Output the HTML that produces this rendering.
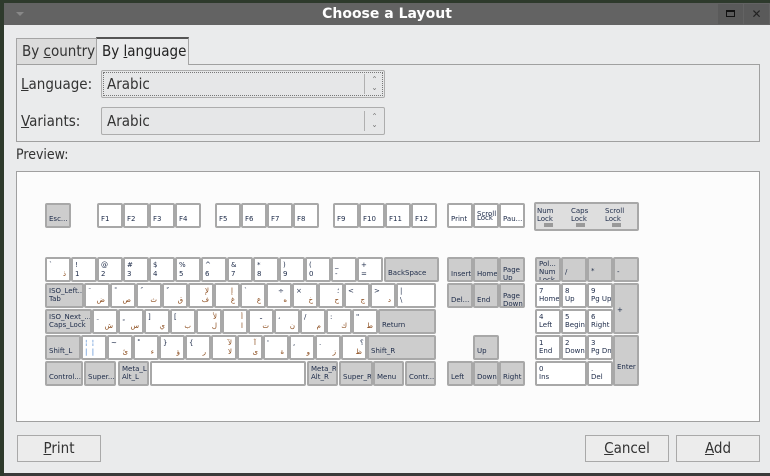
<!DOCTYPE html><html><head><meta charset="utf-8"><style>
*{margin:0;padding:0;box-sizing:border-box}
body{width:770px;height:476px;background:#2e3a2c;position:relative;overflow:hidden;font-family:"DejaVu Sans Condensed","DejaVu Sans","Liberation Sans",sans-serif}
.win{position:absolute;left:4px;top:3px;width:766px;height:471px;background:#eaebec}
.tb{position:absolute;left:0;top:0;width:766px;height:22px;background:#636363;color:#fff;font-weight:bold;font-size:14px;text-align:center;line-height:22px;font-family:"DejaVu Sans",sans-serif}
.a{position:absolute;white-space:nowrap}
.k{position:absolute;height:25px;border:2px solid #a8a8a8;border-radius:2px;background:#fff;font-size:7px;color:#1c2a48;line-height:8px;overflow:hidden;white-space:nowrap;font-family:"DejaVu Sans",sans-serif}
.g{background:#cdcdcd}
.k .t{position:absolute;left:2px;top:2px}
.k .b{position:absolute;left:2px;bottom:2px}
.k .m{position:absolute;left:2px;top:8px}
.k .r{position:absolute;right:3px;bottom:2px;color:#8a4a1a;font-family:"DejaVu Sans",sans-serif}
.btn{position:absolute;height:27px;border:1px solid #a9a9a9;background:#ececec;font-size:15px;color:#333;text-align:center;line-height:25px}
.cb{position:absolute;left:101px;width:284px;height:28px;border:1px solid #adadad;border-radius:2px;background:#e6e7e8;font-size:15px;color:#333;line-height:26px;padding-left:5px}
.cb .s{position:absolute;right:0;top:3px;width:20px;height:20px;border-left:1px solid #b0b0b0;font-size:8px;line-height:8px;text-align:center;color:#777;padding-top:2px}
.lbl{position:absolute;font-size:15px;color:#333;white-space:nowrap}
</style></head><body>
<div class="win">
<div class="tb">Choose a Layout
<div class="a" style="left:12px;top:9px;width:0;height:0;border-left:4px solid transparent;border-right:4px solid transparent;border-top:4px solid #888"></div>
<div class="a" style="left:714px;top:1px;width:25px;height:20px;background:#5a5a5a"><div class="a" style="left:8px;top:6px;width:9px;height:7px;border:1px solid #111;border-top:2px solid #111"></div></div>
<div class="a" style="left:740px;top:1px;width:25px;height:20px;background:#5a5a5a;color:#222;font-weight:normal;font-size:12px;line-height:20px;text-align:center">✕</div>
</div>
</div>
<!-- tabs -->
<div class="a" style="left:16px;top:38px;width:81px;height:27px;border:1px solid #a5a5a5;background:#dcdcdc;font-size:15px;color:#333;line-height:25px;padding-left:5px">By <u>c</u>ountry</div>
<div class="a" style="left:16px;top:64px;width:744px;height:78px;border:1px solid #a0a0a0"></div>
<div class="a" style="left:96px;top:37px;width:93px;height:28px;border:1px solid #a5a5a5;border-top:2px solid #555;border-bottom:none;background:#eaebec;font-size:15px;color:#222;line-height:24px;padding-left:5px">By <u>l</u>anguage</div>
<div class="lbl" style="left:21px;top:75px"><u>L</u>anguage:</div>
<div class="cb" style="top:70px;outline:1px dotted #777;outline-offset:-3px">Arabic<div class="s">⌃<br>⌄</div></div>
<div class="lbl" style="left:21px;top:112px"><u>V</u>ariants:</div>
<div class="cb" style="top:107px">Arabic<div class="s">⌃<br>⌄</div></div>
<div class="lbl" style="left:16px;top:147px;font-size:14px">Preview:</div>
<div class="a" style="left:16px;top:171px;width:744px;height:251px;border:1px solid #a0a0a0;background:#fcfcfc"></div>
<!-- F row -->
<div class="k g" style="left:45px;top:203px;width:26px"><span class="m" style="top:10px">Esc...</span></div>
<div class="k" style="left:97px;top:203px;width:26px"><span class="m" style="top:10px">F1</span></div>
<div class="k" style="left:123px;top:203px;width:26px"><span class="m" style="top:10px">F2</span></div>
<div class="k" style="left:149px;top:203px;width:26px"><span class="m" style="top:10px">F3</span></div>
<div class="k" style="left:175px;top:203px;width:26px"><span class="m" style="top:10px">F4</span></div>
<div class="k" style="left:215px;top:203px;width:26px"><span class="m" style="top:10px">F5</span></div>
<div class="k" style="left:241px;top:203px;width:26px"><span class="m" style="top:10px">F6</span></div>
<div class="k" style="left:267px;top:203px;width:26px"><span class="m" style="top:10px">F7</span></div>
<div class="k" style="left:293px;top:203px;width:26px"><span class="m" style="top:10px">F8</span></div>
<div class="k" style="left:333px;top:203px;width:26px"><span class="m" style="top:10px">F9</span></div>
<div class="k" style="left:359px;top:203px;width:26px"><span class="m" style="top:10px">F10</span></div>
<div class="k" style="left:385px;top:203px;width:26px"><span class="m" style="top:10px">F11</span></div>
<div class="k" style="left:411px;top:203px;width:26px"><span class="m" style="top:10px">F12</span></div>
<div class="k" style="left:447px;top:203px;width:26px"><span class="m" style="top:10px">Print</span></div>
<div class="k" style="left:473px;top:203px;width:26px"><span class="t" style="top:5px">Scroll</span><span class="b" style="bottom:4px">Lock</span></div>
<div class="k" style="left:499px;top:203px;width:26px"><span class="m" style="top:10px">Pau...</span></div>
<div class="k g" style="left:534px;top:202px;width:105px;height:29px;background:#dedede"><span class="t" style="left:1px;top:3px">Num<br>Lock</span><span class="t" style="left:35px;top:3px">Caps<br>Lock</span><span class="t" style="left:69px;top:3px">Scroll<br>Lock</span>
<div class="a" style="left:8px;top:19px;width:9px;height:4px;background:#999"></div><div class="a" style="left:40px;top:19px;width:9px;height:4px;background:#999"></div><div class="a" style="left:76px;top:19px;width:9px;height:4px;background:#999"></div></div>
<!-- row 1 -->
<div class="k" style="left:45px;top:257px;width:26px"><span class="t">ˋ</span><span class="r">ذ</span></div>
<div class="k" style="left:71px;top:257px;width:26px"><span class="t">!</span><span class="b">1</span></div>
<div class="k" style="left:97px;top:257px;width:26px"><span class="t">@</span><span class="b">2</span></div>
<div class="k" style="left:123px;top:257px;width:26px"><span class="t">#</span><span class="b">3</span></div>
<div class="k" style="left:149px;top:257px;width:26px"><span class="t">$</span><span class="b">4</span></div>
<div class="k" style="left:175px;top:257px;width:26px"><span class="t">%</span><span class="b">5</span></div>
<div class="k" style="left:201px;top:257px;width:26px"><span class="t">^</span><span class="b">6</span></div>
<div class="k" style="left:227px;top:257px;width:26px"><span class="t">&amp;</span><span class="b">7</span></div>
<div class="k" style="left:253px;top:257px;width:26px"><span class="t">*</span><span class="b">8</span></div>
<div class="k" style="left:279px;top:257px;width:26px"><span class="t">)</span><span class="b">9</span></div>
<div class="k" style="left:305px;top:257px;width:26px"><span class="t">(</span><span class="b">0</span></div>
<div class="k" style="left:331px;top:257px;width:26px"><span class="t">_</span><span class="b">-</span></div>
<div class="k" style="left:357px;top:257px;width:26px"><span class="t">+</span><span class="b">=</span></div>
<div class="k g" style="left:384px;top:257px;width:55px"><span class="b" style="bottom:3px">BackSpace</span></div>
<!-- row 2 -->
<div class="k g" style="left:45px;top:283px;width:39px"><span class="t">ISO_Left...</span><span class="b" style="bottom:3px">Tab</span></div>
<div class="k" style="left:84px;top:283px;width:26px"><span class="t">َ</span><span class="r">ض</span></div>
<div class="k" style="left:110px;top:283px;width:26px"><span class="t">ً</span><span class="r">ص</span></div>
<div class="k" style="left:136px;top:283px;width:26px"><span class="t">ُ</span><span class="r">ث</span></div>
<div class="k" style="left:162px;top:283px;width:26px"><span class="t">ٌ</span><span class="r">ق</span></div>
<div class="k" style="left:188px;top:283px;width:26px"><span class="t" style="left:15px;color:#8a4a1a">لإ</span><span class="r">ف</span></div>
<div class="k" style="left:214px;top:283px;width:26px"><span class="t" style="left:15px;color:#8a4a1a">إ</span><span class="r">غ</span></div>
<div class="k" style="left:240px;top:283px;width:26px"><span class="t">`</span><span class="r">ع</span></div>
<div class="k" style="left:266px;top:283px;width:26px"><span class="t" style="left:10px">÷</span><span class="r">ه</span></div>
<div class="k" style="left:292px;top:283px;width:26px"><span class="t">×</span><span class="r">خ</span></div>
<div class="k" style="left:318px;top:283px;width:26px"><span class="t" style="left:17px">؛</span><span class="r">ح</span></div>
<div class="k" style="left:344px;top:283px;width:26px"><span class="t">&lt;</span><span class="r">ج</span></div>
<div class="k" style="left:370px;top:283px;width:26px"><span class="t">&gt;</span><span class="r">د</span></div>
<div class="k" style="left:396px;top:283px;width:40px"><span class="t">|</span><span class="b">\</span></div>
<!-- row 3 -->
<div class="k g" style="left:45px;top:309px;width:47px"><span class="t">ISO_Next_...</span><span class="b" style="bottom:3px">Caps_Lock</span></div>
<div class="k" style="left:92px;top:309px;width:26px"><span class="t">ِ</span><span class="r">ش</span></div>
<div class="k" style="left:118px;top:309px;width:26px"><span class="t">ٍ</span><span class="r">س</span></div>
<div class="k" style="left:144px;top:309px;width:26px"><span class="t">]</span><span class="r">ي</span></div>
<div class="k" style="left:170px;top:309px;width:26px"><span class="t">[</span><span class="r">ب</span></div>
<div class="k" style="left:196px;top:309px;width:26px"><span class="t" style="left:15px;color:#8a4a1a">لأ</span><span class="r">ل</span></div>
<div class="k" style="left:222px;top:309px;width:26px"><span class="t" style="left:17px;color:#8a4a1a">أ</span><span class="r">ا</span></div>
<div class="k" style="left:248px;top:309px;width:26px"><span class="t" style="left:10px">ـ</span><span class="r">ت</span></div>
<div class="k" style="left:274px;top:309px;width:26px"><span class="t">،</span><span class="r">ن</span></div>
<div class="k" style="left:300px;top:309px;width:26px"><span class="t">/</span><span class="r">م</span></div>
<div class="k" style="left:326px;top:309px;width:26px"><span class="t">:</span><span class="r">ك</span></div>
<div class="k" style="left:352px;top:309px;width:26px"><span class="t">"</span><span class="r">ط</span></div>
<div class="k g" style="left:378px;top:309px;width:58px"><span class="b" style="bottom:3px">Return</span></div>
<!-- row 4 -->
<div class="k g" style="left:45px;top:335px;width:36px"><span class="b" style="bottom:3px">Shift_L</span></div>
<div class="k" style="left:81px;top:335px;width:26px;color:#3a7acc"><span class="t">¦ &nbsp;¦</span><span class="b">| &nbsp;|</span></div>
<div class="k" style="left:107px;top:335px;width:26px"><span class="t">~</span><span class="r">ئ</span></div>
<div class="k" style="left:133px;top:335px;width:26px"><span class="t">ْ</span><span class="r">ء</span></div>
<div class="k" style="left:159px;top:335px;width:26px"><span class="t">}</span><span class="r">ؤ</span></div>
<div class="k" style="left:185px;top:335px;width:26px"><span class="t">{</span><span class="r">ر</span></div>
<div class="k" style="left:211px;top:335px;width:26px"><span class="t" style="left:15px;color:#8a4a1a">لآ</span><span class="r">لا</span></div>
<div class="k" style="left:237px;top:335px;width:26px"><span class="t" style="left:15px;color:#8a4a1a">آ</span><span class="r">ى</span></div>
<div class="k" style="left:263px;top:335px;width:26px"><span class="t">'</span><span class="r">ة</span></div>
<div class="k" style="left:289px;top:335px;width:26px"><span class="t">,</span><span class="r">و</span></div>
<div class="k" style="left:315px;top:335px;width:26px"><span class="t">.</span><span class="r">ز</span></div>
<div class="k" style="left:341px;top:335px;width:26px"><span class="t" style="left:17px">؟</span><span class="r">ظ</span></div>
<div class="k g" style="left:367px;top:335px;width:69px"><span class="b" style="bottom:3px">Shift_R</span></div>
<!-- row 5 -->
<div class="k g" style="left:45px;top:361px;width:38px"><span class="b" style="bottom:3px">Control...</span></div>
<div class="k g" style="left:84px;top:361px;width:32px"><span class="b" style="bottom:3px">Super...</span></div>
<div class="k g" style="left:118px;top:361px;width:31px"><span class="t">Meta_L</span><span class="b" style="bottom:3px">Alt_L</span></div>
<div class="k" style="left:150px;top:361px;width:156px"></div>
<div class="k g" style="left:307px;top:361px;width:31px"><span class="t">Meta_R</span><span class="b" style="bottom:3px">Alt_R</span></div>
<div class="k g" style="left:339px;top:361px;width:34px"><span class="b" style="bottom:3px">Super_R</span></div>
<div class="k g" style="left:373px;top:361px;width:31px"><span class="b" style="bottom:3px">Menu</span></div>
<div class="k g" style="left:405px;top:361px;width:31px"><span class="b" style="bottom:3px">Contr...</span></div>
<!-- nav -->
<div class="k g" style="left:447px;top:257px;width:26px"><span class="m" style="top:11px">Insert</span></div>
<div class="k g" style="left:473px;top:257px;width:26px"><span class="m" style="top:11px">Home</span></div>
<div class="k g" style="left:499px;top:257px;width:26px"><span class="t" style="top:7px">Page<br>Up</span></div>
<div class="k g" style="left:447px;top:283px;width:26px"><span class="m" style="top:11px">Del...</span></div>
<div class="k g" style="left:473px;top:283px;width:26px"><span class="m" style="top:11px">End</span></div>
<div class="k g" style="left:499px;top:283px;width:26px"><span class="t" style="top:7px">Page<br>Down</span></div>
<div class="k g" style="left:473px;top:335px;width:26px"><span class="b" style="bottom:3px">Up</span></div>
<div class="k g" style="left:447px;top:361px;width:26px"><span class="b" style="bottom:3px">Left</span></div>
<div class="k g" style="left:473px;top:361px;width:26px"><span class="b" style="bottom:3px">Down</span></div>
<div class="k g" style="left:499px;top:361px;width:26px"><span class="b" style="bottom:3px">Right</span></div>
<!-- numpad -->
<div class="k g" style="left:535px;top:257px;width:26px"><span class="t" style="top:1px">Pol...<br>Num<br>Lock</span></div>
<div class="k g" style="left:561px;top:257px;width:26px"><span class="b" style="bottom:4px">/</span></div>
<div class="k g" style="left:587px;top:257px;width:26px"><span class="b" style="bottom:5px">*</span></div>
<div class="k g" style="left:613px;top:257px;width:26px"><span class="b" style="bottom:4px">-</span></div>
<div class="k" style="left:535px;top:283px;width:26px"><span class="t">7</span><span class="b" style="bottom:3px">Home</span></div>
<div class="k" style="left:561px;top:283px;width:26px"><span class="t">8</span><span class="b" style="bottom:3px">Up</span></div>
<div class="k" style="left:587px;top:283px;width:26px"><span class="t">9</span><span class="b" style="bottom:3px">Pg Up</span></div>
<div class="k g" style="left:613px;top:283px;width:26px;height:51px"><span class="m" style="top:21px">+</span></div>
<div class="k" style="left:535px;top:309px;width:26px"><span class="t">4</span><span class="b" style="bottom:3px">Left</span></div>
<div class="k" style="left:561px;top:309px;width:26px"><span class="t">5</span><span class="b" style="bottom:3px">Begin</span></div>
<div class="k" style="left:587px;top:309px;width:26px"><span class="t">6</span><span class="b" style="bottom:3px">Right</span></div>
<div class="k" style="left:535px;top:335px;width:26px"><span class="t">1</span><span class="b" style="bottom:3px">End</span></div>
<div class="k" style="left:561px;top:335px;width:26px"><span class="t">2</span><span class="b" style="bottom:3px">Down</span></div>
<div class="k" style="left:587px;top:335px;width:26px"><span class="t">3</span><span class="b" style="bottom:3px">Pg Dn</span></div>
<div class="k g" style="left:613px;top:335px;width:26px;height:51px"><span class="m" style="top:26px">Enter</span></div>
<div class="k" style="left:535px;top:361px;width:52px"><span class="t">0</span><span class="b" style="bottom:3px">Ins</span></div>
<div class="k" style="left:587px;top:361px;width:26px"><span class="t">.</span><span class="b" style="bottom:3px">Del</span></div>
<!-- buttons -->
<div class="btn" style="left:17px;top:435px;width:84px"><u>P</u>rint</div>
<div class="btn" style="left:585px;top:435px;width:84px"><u>C</u>ancel</div>
<div class="btn" style="left:676px;top:435px;width:84px"><u>A</u>dd</div>
<div class="a" style="left:4px;top:473px;width:766px;height:3px;background:#3a3a3a"></div>
</body></html>
